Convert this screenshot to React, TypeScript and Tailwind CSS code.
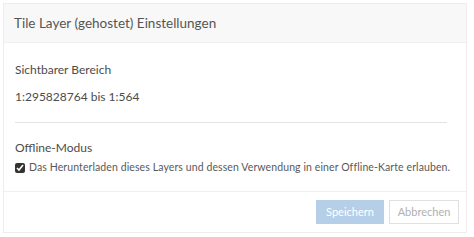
export default function App() {
  return (
    <div className="w-[474px] h-[237px] bg-white p-[3px] pr-[7px] font-['Lato','Open_Sans',sans-serif]">
      <div className="h-[230px] border border-[#ededed] flex flex-col">
        <div className="h-[39px] bg-[#f8f8f8] border-b border-[#f0f0f0] flex items-center px-[10px]">
          <h1 className="text-[13.5px] text-[#555]">Tile Layer (gehostet) Einstellungen</h1>
        </div>
        <div className="flex-1 px-[11px] pt-[20px]">
          <p className="text-[12px] text-[#4c4c4c] leading-[14px]">Sichtbarer Bereich</p>
          <p className="text-[12px] text-[#4c4c4c] leading-[14px] mt-[13px]">1:295828764 bis 1:564</p>
          <hr className="border-[#e4e4e4] mt-[18px] mr-[8px]" />
          <p className="text-[12px] text-[#4c4c4c] leading-[14px] mt-[18px]">Offline-Modus</p>
          <label className="flex items-center gap-[4px] mt-[5px] text-[10.5px] text-[#595959] whitespace-nowrap tracking-[0.1px]">
            <input type="checkbox" defaultChecked className="w-[10px] h-[10px] accent-[#333]" />
            Das Herunterladen dieses Layers und dessen Verwendung in einer Offline-Karte erlauben.
          </label>
        </div>
        <div className="h-[41px] border-t border-[#f0f0f0] flex items-center justify-end gap-[5px] pr-[7px]">
          <button className="w-[68px] h-[24px] bg-[#b5cfe9] text-white text-[11px]">Speichern</button>
          <button className="w-[70px] h-[24px] bg-white border border-[#e0e0e0] text-[#b0b0b0] text-[11px]">Abbrechen</button>
        </div>
      </div>
    </div>
  );
}
